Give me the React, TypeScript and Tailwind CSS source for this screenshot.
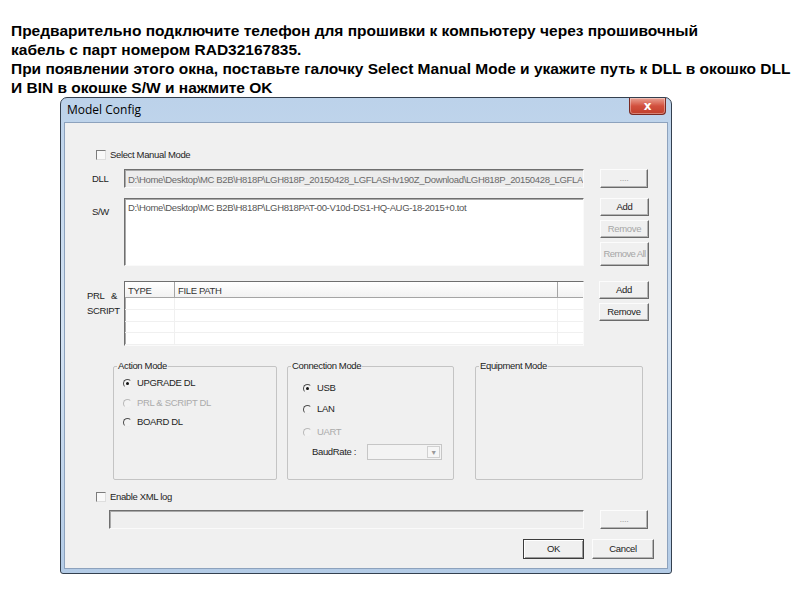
import React from 'react'

type BtnProps = {
  label: string
  className: string
  disabled?: boolean
  def?: boolean
}

function Button({ label, className, disabled, def }: BtnProps) {
  return (
    <div
      className={`flex items-center justify-center whitespace-nowrap bg-[#f0f0f0] border ${
        def
          ? 'border-[#3c3c3c] shadow-[inset_1px_1px_0_#fff,inset_-1px_-1px_0_#9a9a9a]'
          : 'border-t-[#fcfcfc] border-l-[#fcfcfc] border-r-[#6a6a6a] border-b-[#6a6a6a] shadow-[inset_-1px_-1px_0_#b4b4b4]'
      } ${disabled ? 'text-[#a6a6a6]' : 'text-[#222]'} ${className}`}
    >
      {label}
    </div>
  )
}

function Edit({ className, children }: { className: string; children?: React.ReactNode }) {
  return (
    <div
      className={`shrink-0 border border-t-[#6f6f6f] border-l-[#6f6f6f] border-r-[#fafafa] border-b-[#fafafa] shadow-[inset_1px_1px_0_#a9a9a9] overflow-hidden whitespace-nowrap ${className}`}
    >
      {children}
    </div>
  )
}

function Check({ label }: { label: string }) {
  return (
    <div className="flex items-center h-[11px]">
      <span className="w-[10px] h-[10px] border border-t-[#7c7c7c] border-l-[#7c7c7c] border-r-[#dedede] border-b-[#dedede] bg-[#f9f9f9]" />
      <span className="ml-[4px] leading-[11px]">{label}</span>
    </div>
  )
}

function Radio({ label, checked, disabled, className }: { label: string; checked?: boolean; disabled?: boolean; className: string }) {
  return (
    <div className={`flex items-center h-[12px] ${className}`}>
      <span
        className={`w-[9px] h-[9px] rounded-full border flex items-center justify-center bg-[#f3f3f3] ${
          disabled
            ? 'border-t-[#b9b9b9] border-l-[#b9b9b9] border-r-[#f0f0f0] border-b-[#f0f0f0]'
            : 'border-t-[#4e4e4e] border-l-[#4e4e4e] border-r-[#eeeeee] border-b-[#eeeeee]'
        }`}
      >
        {checked && <span className="w-[3px] h-[3px] rounded-full bg-[#111]" />}
      </span>
      <span className={`ml-[5px] leading-[12px] ${disabled ? 'text-[#ababab]' : ''}`}>{label}</span>
    </div>
  )
}

function Group({ title, className, children }: { title: string; className: string; children?: React.ReactNode }) {
  return (
    <fieldset className={`shrink-0 border border-[#c4c4c4] rounded-[2px] ${className}`}>
      <legend className="ml-[3px] px-[1px] leading-[12px] text-[#222]">{title}</legend>
      {children}
    </fieldset>
  )
}

export default function App() {
  return (
    <div className="w-[800px] h-[600px] bg-white overflow-hidden">
      {/* instruction text */}
      <div className="h-[97px] pt-[21px] pl-[11px] text-[15.5px] leading-[19px] font-bold text-black font-['Liberation_Sans',Arial,sans-serif] whitespace-nowrap">
        <p>Предварительно подключите телефон для прошивки к компьютеру через прошивочный</p>
        <p>кабель с парт номером RAD32167835.</p>
        <p>При появлении этого окна, поставьте галочку Select Manual Mode и укажите путь к DLL в окошко DLL</p>
        <p>И BIN в окошке S/W и нажмите OK</p>
      </div>

      {/* Model Config window */}
      <div className="ml-[60px] w-[612px] h-[477px] rounded-t-[7px] rounded-b-[3px] border border-[#34404f] bg-gradient-to-b from-[#bcd2ea] via-[#d3e2f2] to-[#b3cbe6] flex flex-col px-[3px] pb-[4px]">
        <div className="h-[24px] flex items-start justify-between">
          <span className="pl-[3px] pt-[5px] text-[12px] leading-[14px] text-black font-['Open_Sans',sans-serif]">
            Model Config
          </span>
          <div className="mr-[2px] w-[37px] h-[17px] rounded-b-[4px] border border-t-0 border-[#7a2a22] bg-gradient-to-b from-[#e8a093] via-[#d2503e] to-[#c0402c] flex items-center justify-center text-white font-bold text-[12px] leading-none font-['DejaVu_Sans',sans-serif] shadow-[inset_0_0_0_1px_rgba(255,255,255,0.35)]">
            x
          </div>
        </div>

        <div className="flex-1 border border-[#8da2bd] bg-[#f0f0f0] flex flex-col font-['Liberation_Sans',Arial,sans-serif] text-[9.5px] tracking-[-0.35px] text-[#1e1e1e]">
          {/* Select Manual Mode */}
          <div className="mt-[26px] ml-[31px]">
            <Check label="Select Manual Mode" />
          </div>

          {/* DLL */}
          <div className="mt-[9px] h-[19px] flex">
            <div className="w-[59px] shrink-0 pl-[27px] pt-[3px]">DLL</div>
            <Edit className="w-[460px] h-[19px] bg-[#ececec] text-[#6a6a6a] pl-[3px] pt-[3px]">
              D:\Home\Desktop\MC B2B\H818P\LGH818P_20150428_LGFLASHv190Z_Download\LGH818P_20150428_LGFLASH
            </Edit>
            <Button label="...." disabled className="ml-[16px] w-[48px] h-[19px]" />
          </div>

          {/* S/W */}
          <div className="mt-[10px] h-[68px] flex">
            <div className="w-[59px] shrink-0 pl-[27px] pt-[7px]">S/W</div>
            <Edit className="w-[460px] h-[68px] bg-white text-[#555] pl-[3px] pt-[2px]">
              D:\Home\Desktop\MC B2B\H818P\LGH818PAT-00-V10d-DS1-HQ-AUG-18-2015+0.tot
            </Edit>
            <div className="ml-[16px] flex flex-col gap-[4px]">
              <Button label="Add" className="w-[49px] h-[18px] text-[#6a6a6a]" />
              <Button label="Remove" disabled className="w-[49px] h-[18px]" />
              <Button label="Remove All" disabled className="w-[49px] h-[24px] tracking-[-0.6px]" />
            </div>
          </div>

          {/* PRL & SCRIPT */}
          <div className="mt-[15px] h-[65px] flex">
            <div className="w-[59px] shrink-0 pl-[22px] pt-[7px] leading-[15px]">
              <p>PRL &nbsp;&nbsp;&amp;</p>
              <p>SCRIPT</p>
            </div>
            <Edit className="w-[460px] h-[65px] bg-white flex flex-col">
              <div className="h-[16px] flex border-b border-[#a5a5a5] bg-gradient-to-b from-[#ffffff] to-[#f2f2f2] text-[#333]">
                <div className="w-[50px] pl-[3px] pt-[2px] border-r border-[#a5a5a5]">TYPE</div>
                <div className="w-[383px] pl-[3px] pt-[2px] border-r border-[#a5a5a5]">FILE PATH</div>
                <div className="flex-1" />
              </div>
              {[0, 1, 2, 3].map((r) => (
                <div key={r} className="h-[12px] flex border-b border-[#f0f0f0]">
                  <div className="w-[50px] border-r border-[#f0f0f0]" />
                  <div className="w-[383px] border-r border-[#f0f0f0]" />
                  <div className="flex-1" />
                </div>
              ))}
            </Edit>
            <div className="ml-[15px] flex flex-col gap-[4px]">
              <Button label="Add" className="w-[50px] h-[18px]" />
              <Button label="Remove" className="w-[50px] h-[18px]" />
            </div>
          </div>

          {/* mode groups */}
          <div className="mt-[14px] h-[120px] flex ml-[48px]">
            <Group title="Action Mode" className="w-[164px] h-[120px]">
              <Radio label="UPGRADE DL" checked className="mt-[5px] ml-[9px]" />
              <Radio label="PRL & SCRIPT DL" disabled className="mt-[8px] ml-[9px]" />
              <Radio label="BOARD DL" className="mt-[7px] ml-[9px]" />
            </Group>
            <Group title="Connection Mode" className="ml-[10px] w-[167px] h-[120px]">
              <Radio label="USB" checked className="mt-[10px] ml-[15px]" />
              <Radio label="LAN" className="mt-[9px] ml-[15px]" />
              <Radio label="UART" disabled className="mt-[11px] ml-[15px]" />
              <div className="mt-[6px] flex items-center h-[16px]">
                <span className="ml-[24px] w-[55px]">BaudRate :</span>
                <div className="w-[75px] h-[16px] border border-[#c6c6c6] bg-[#f3f3f3] flex justify-end p-[1px]">
                  <div className="w-[13px] h-[12px] border border-[#d0d0d0] bg-[#f6f6f6] flex items-center justify-center text-[#9a9a9a] text-[7px] leading-none">
                    ▼
                  </div>
                </div>
              </div>
            </Group>
            <Group title="Equipment Mode" className="ml-[21px] w-[168px] h-[120px]" />
          </div>

          {/* Enable XML log */}
          <div className="mt-[11px] ml-[31px]">
            <Check label="Enable XML log" />
          </div>

          <div className="mt-[8px] h-[19px] flex">
            <Edit className="ml-[44px] w-[475px] h-[19px] bg-[#efefef]" />
            <Button label="...." disabled className="ml-[16px] w-[48px] h-[19px]" />
          </div>

          <div className="mt-[10px] h-[20px] flex">
            <Button label="OK" def className="ml-[458px] w-[61px] h-[20px]" />
            <Button label="Cancel" className="ml-[8px] w-[62px] h-[20px]" />
          </div>
        </div>
      </div>
    </div>
  )
}
